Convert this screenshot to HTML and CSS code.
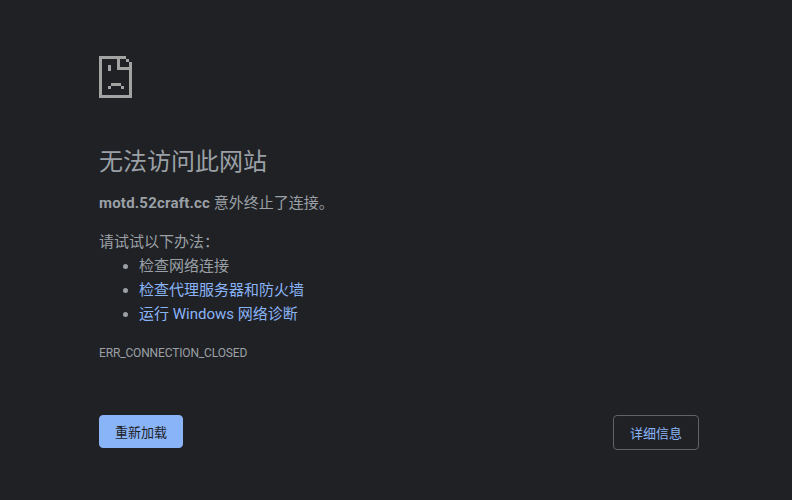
FILE: index.html
```html
<!DOCTYPE html>
<html lang="zh-CN">
<head>
    <meta charset="UTF-8">
    <meta name="viewport" content="width=device-width, initial-scale=1.0">
    <title>motd.52craft.cc</title>
    <link rel="stylesheet" href="styles.css">
</head>
<body>
    <div class="wrapper">
        <svg class="sad-file" width="33" height="42" viewBox="0 0 33 42" shape-rendering="crispEdges" aria-hidden="true">
            <g fill="#a3a3a3">
                <rect x="0" y="0" width="27" height="3"/>
                <rect x="0" y="0" width="3" height="42"/>
                <rect x="0" y="39" width="33" height="3"/>
                <rect x="30" y="6" width="3" height="36"/>
                <rect x="18" y="0" width="3" height="14"/>
                <rect x="18" y="11" width="15" height="3"/>
                <rect x="27" y="3" width="3" height="3"/>
                <rect x="9" y="9" width="3" height="6"/>
                <rect x="12" y="27" width="10" height="3"/>
                <rect x="9" y="30" width="3" height="3"/>
                <rect x="22" y="30" width="3" height="3"/>
            </g>
        </svg>
        <h1 class="title">无法访问此网站</h1>
        <p class="summary"><strong>motd.52craft.cc</strong> 意外终止了连接。</p>
        <div class="suggestions">
            <p class="try">请试试以下办法：</p>
            <ul class="try-list">
                <li>检查网络连接</li>
                <li><a href="#">检查代理服务器和防火墙</a></li>
                <li><a href="#">运行 Windows 网络诊断</a></li>
            </ul>
        </div>
        <div class="error-code">ERR_CONNECTION_CLOSED</div>
        <div class="buttons">
            <button class="btn btn-primary">重新加载</button>
            <button class="btn btn-details">详细信息</button>
        </div>
    </div>
</body>
</html>
```

FILE: styles.css
```css
html, body {
    height: 100%;
    margin: 0;
}
body {
    background-color: #202124;
    color: #9aa0a6;
    font-family: Roboto, "Noto Sans CJK SC", sans-serif;
    font-size: 15px;
}
.wrapper {
    width: 600px;
    margin-left: 99px;
    padding-top: 56px;
}
.sad-file {
    display: block;
}
.title {
    margin: 47px 0 0;
    font-size: 24px;
    font-weight: 400;
    line-height: 34px;
}
.summary {
    margin: 12px 0 0;
    line-height: 24px;
}
.summary strong {
    font-weight: 700;
    letter-spacing: 0.2px;
}
.suggestions {
    margin-top: 15px;
}
.try {
    margin: 0;
    line-height: 24px;
}
.try-list {
    margin: 0;
    padding-left: 40px;
}
.try-list li {
    line-height: 24px;
}
.try-list a {
    color: #8ab4f8;
    text-decoration: none;
}
.error-code {
    margin-top: 18px;
    font-size: 12px;
    line-height: 18px;
    letter-spacing: -0.15px;
}
.buttons {
    display: flex;
    justify-content: space-between;
    margin-top: 53px;
}
.btn {
    font-family: inherit;
    font-size: 13px;
    height: 33px;
    padding: 0 15px;
    border-radius: 4px;
}
.btn-primary {
    background-color: #8ab4f8;
    border: 1px solid #8ab4f8;
    color: #202124;
}
.btn-details {
    background-color: #202124;
    border: 1px solid #5f6368;
    color: #8ab4f8;
    height: 35px;
    padding: 0 16px;
}
```
